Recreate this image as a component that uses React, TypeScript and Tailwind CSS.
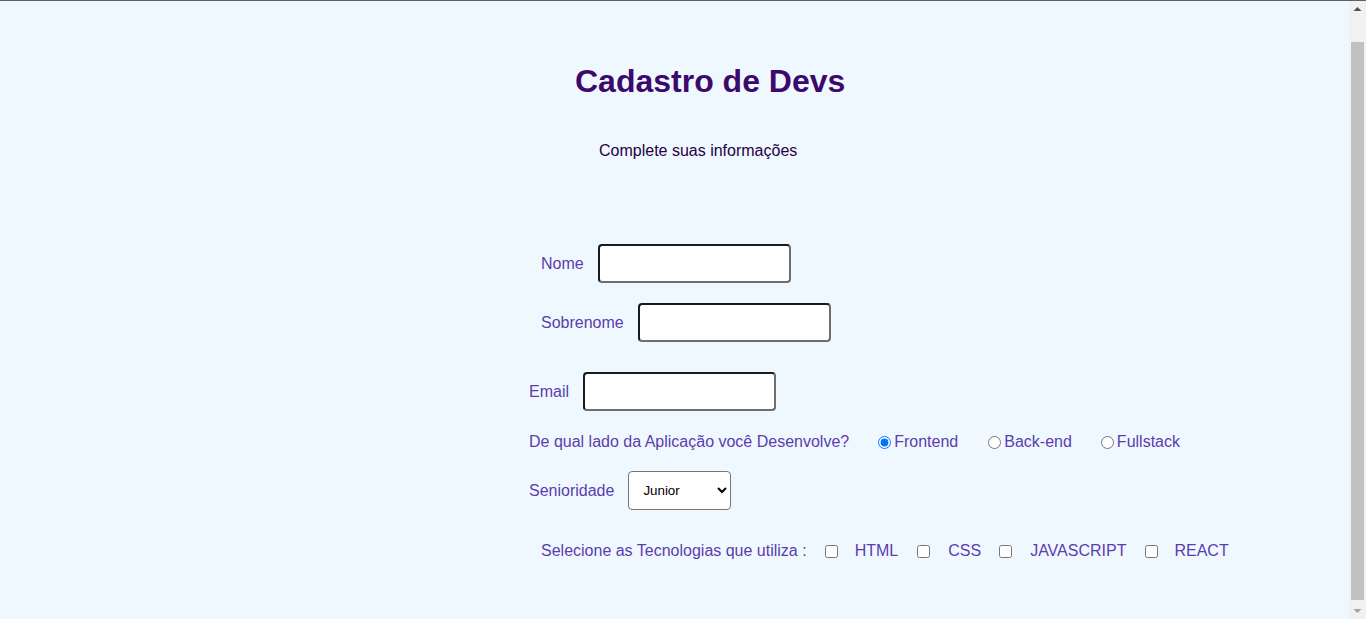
import React from "react";

const label = "text-[16px] leading-[18px] text-[#5a3dae]";
const inputCls =
  "w-[193px] h-[39px] rounded-[4px] bg-white border-2 border-t-[#1a1a1a] border-l-[#1a1a1a] border-r-[#6e6e6e] border-b-[#6e6e6e]";

function Scrollbar() {
  return (
    <div className="w-[17px] shrink-0 bg-[#f1f1f1] flex flex-col items-center">
      <svg width="17" height="17" viewBox="0 0 17 17" className="shrink-0">
        <path d="M4.5 10 L8.5 6 L12.5 10 Z" fill="#505050" />
      </svg>
      <div className="w-[13px] flex-1 mt-[24px] mb-[2px] bg-[#c1c1c1]" />
      <svg width="17" height="17" viewBox="0 0 17 17" className="shrink-0">
        <path d="M4.5 7 L8.5 11 L12.5 7 Z" fill="#a3a3a3" />
      </svg>
    </div>
  );
}

export default function App() {
  return (
    <div
      className="h-[619px] flex bg-[#f0f8ff] border-t border-[#5f5f6a] overflow-hidden"
      style={{ fontFamily: '"Liberation Sans", Arial, sans-serif' }}
    >
      <div className="flex-1 flex flex-col pl-[529px]">
        <h1 className="ml-[46px] mt-[62px] text-[32px] leading-[37px] font-bold text-[#3c096c]">
          Cadastro de Devs
        </h1>
        <p className="ml-[70px] mt-[42px] text-[16px] leading-[18px] text-[#240046]">
          Complete suas informações
        </p>

        <form className="flex flex-col">
          {/* nome */}
          <div className="flex items-center ml-[12px] mt-[84px]">
            <label className={label}>Nome</label>
            <input type="text" className={`${inputCls} ml-[14px]`} />
          </div>

          <div className="flex items-center ml-[12px] mt-[20px]">
            <label className={label}>Sobrenome</label>
            <input type="text" className={`${inputCls} ml-[14px]`} />
          </div>

          <div className="flex items-center mt-[30px]">
            <label className={label}>Email</label>
            <input type="email" className={`${inputCls} ml-[14px]`} />
          </div>

          {/* lado da aplicação */}
          <div className="flex items-center mt-[22px] h-[18px]">
            <span className={label}>De qual lado da Aplicação você Desenvolve?</span>
            <label className={`${label} flex items-center gap-[3px] ml-[29px]`}>
              <input type="radio" name="lado" defaultChecked className="w-[13px] h-[13px]" />
              Frontend
            </label>
            <label className={`${label} flex items-center gap-[3px] ml-[30px]`}>
              <input type="radio" name="lado" className="w-[13px] h-[13px]" />
              Back-end
            </label>
            <label className={`${label} flex items-center gap-[3px] ml-[29px]`}>
              <input type="radio" name="lado" className="w-[13px] h-[13px]" />
              Fullstack
            </label>
          </div>

          <div className="flex items-center mt-[20px]">
            <label className={label}>Senioridade</label>
            <select
              defaultValue="junior"
              className="ml-[14px] w-[103px] h-[39px] pl-[10px] pr-[6px] rounded-[4px] border border-[#767676] bg-white text-[13.33px] text-black"
              style={{ fontFamily: "Arial, 'Liberation Sans', sans-serif" }}
            >
              <option value="junior">Junior</option>
              <option value="pleno">Pleno</option>
              <option value="senior">Senior</option>
            </select>
          </div>

          {/* tecnologias */}
          <div className="flex items-center ml-[12px] mt-[32px] h-[18px]">
            <span className={label}>Selecione as Tecnologias que utiliza :</span>
            <input type="checkbox" className="w-[13px] h-[13px] ml-[18px]" />
            <span className={`${label} ml-[17px]`}>HTML</span>
            <input type="checkbox" className="w-[13px] h-[13px] ml-[19px]" />
            <span className={`${label} ml-[18px]`}>CSS</span>
            <input type="checkbox" className="w-[13px] h-[13px] ml-[18px]" />
            <span className={`${label} ml-[18px]`}>JAVASCRIPT</span>
            <input type="checkbox" className="w-[13px] h-[13px] ml-[19px]" />
            <span className={`${label} ml-[16px]`}>REACT</span>
          </div>
        </form>
      </div>
      <Scrollbar />
    </div>
  );
}
